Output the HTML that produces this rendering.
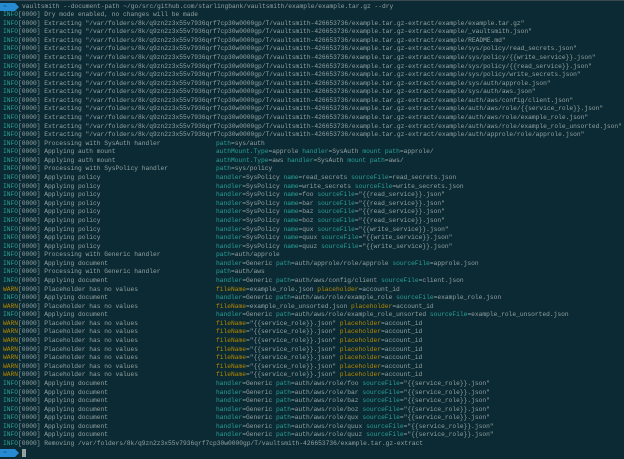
<!DOCTYPE html>
<html><head><meta charset="utf-8"><style>
html,body{margin:0;padding:0;background:#0b2a34;width:624px;height:459px;overflow:hidden}
body{font-family:"Liberation Mono",monospace;font-size:6.25px;color:#93a1a1;position:relative;border-top:1px solid #3a4a50;box-sizing:border-box}
#t{position:absolute;left:3px;top:1.5px}
.l{height:8.58px;line-height:8.58px;white-space:pre}
.i{color:#2aa198}.w{color:#b58900}.k{color:#2aa198}.o{color:#b58900}
.c{display:inline-block;width:213px}
.p{display:inline-block;position:relative;background:#268bd2;color:#0b2a34;width:12px;height:8px;line-height:8px;margin-left:-3px;padding-left:3px;margin-right:7px;vertical-align:top;margin-top:0.3px}
.p:after{content:"";position:absolute;right:-4px;top:0;border-left:4px solid #268bd2;border-top:4px solid transparent;border-bottom:4px solid transparent}
.cur{display:inline-block;width:4px;height:8px;background:#93a1a1;vertical-align:top;margin-top:0.3px}
</style></head><body><div id="t">
<div class="l"><span class="p">~</span>vaultsmith --document-path ~/go/src/github.com/starlingbank/vaultsmith/example/example.tar.gz --dry</div>
<div class="l"><span class="i">INFO</span>[0000] Dry mode enabled, no changes will be made</div>
<div class="l"><span class="i">INFO</span>[0000] Extracting "/var/folders/8k/q9zn2z3x55v7936qrf7cp30w0000gp/T/vaultsmith-426653736/example.tar.gz-extract/example/example.tar.gz"</div>
<div class="l"><span class="i">INFO</span>[0000] Extracting "/var/folders/8k/q9zn2z3x55v7936qrf7cp30w0000gp/T/vaultsmith-426653736/example.tar.gz-extract/example/_vaultsmith.json"</div>
<div class="l"><span class="i">INFO</span>[0000] Extracting "/var/folders/8k/q9zn2z3x55v7936qrf7cp30w0000gp/T/vaultsmith-426653736/example.tar.gz-extract/example/README.md"</div>
<div class="l"><span class="i">INFO</span>[0000] Extracting "/var/folders/8k/q9zn2z3x55v7936qrf7cp30w0000gp/T/vaultsmith-426653736/example.tar.gz-extract/example/sys/policy/read_secrets.json"</div>
<div class="l"><span class="i">INFO</span>[0000] Extracting "/var/folders/8k/q9zn2z3x55v7936qrf7cp30w0000gp/T/vaultsmith-426653736/example.tar.gz-extract/example/sys/policy/{{write_service}}.json"</div>
<div class="l"><span class="i">INFO</span>[0000] Extracting "/var/folders/8k/q9zn2z3x55v7936qrf7cp30w0000gp/T/vaultsmith-426653736/example.tar.gz-extract/example/sys/policy/{{read_service}}.json"</div>
<div class="l"><span class="i">INFO</span>[0000] Extracting "/var/folders/8k/q9zn2z3x55v7936qrf7cp30w0000gp/T/vaultsmith-426653736/example.tar.gz-extract/example/sys/policy/write_secrets.json"</div>
<div class="l"><span class="i">INFO</span>[0000] Extracting "/var/folders/8k/q9zn2z3x55v7936qrf7cp30w0000gp/T/vaultsmith-426653736/example.tar.gz-extract/example/sys/auth/approle.json"</div>
<div class="l"><span class="i">INFO</span>[0000] Extracting "/var/folders/8k/q9zn2z3x55v7936qrf7cp30w0000gp/T/vaultsmith-426653736/example.tar.gz-extract/example/sys/auth/aws.json"</div>
<div class="l"><span class="i">INFO</span>[0000] Extracting "/var/folders/8k/q9zn2z3x55v7936qrf7cp30w0000gp/T/vaultsmith-426653736/example.tar.gz-extract/example/auth/aws/config/client.json"</div>
<div class="l"><span class="i">INFO</span>[0000] Extracting "/var/folders/8k/q9zn2z3x55v7936qrf7cp30w0000gp/T/vaultsmith-426653736/example.tar.gz-extract/example/auth/aws/role/{{service_role}}.json"</div>
<div class="l"><span class="i">INFO</span>[0000] Extracting "/var/folders/8k/q9zn2z3x55v7936qrf7cp30w0000gp/T/vaultsmith-426653736/example.tar.gz-extract/example/auth/aws/role/example_role.json"</div>
<div class="l"><span class="i">INFO</span>[0000] Extracting "/var/folders/8k/q9zn2z3x55v7936qrf7cp30w0000gp/T/vaultsmith-426653736/example.tar.gz-extract/example/auth/aws/role/example_role_unsorted.json"</div>
<div class="l"><span class="i">INFO</span>[0000] Extracting "/var/folders/8k/q9zn2z3x55v7936qrf7cp30w0000gp/T/vaultsmith-426653736/example.tar.gz-extract/example/auth/approle/role/approle.json"</div>
<div class="l"><span class="c"><span class="i">INFO</span>[0000] Processing with SysAuth handler</span><span class="k">path</span>=sys/auth</div>
<div class="l"><span class="c"><span class="i">INFO</span>[0000] Applying auth mount</span><span class="k">authMount.Type</span>=approle <span class="k">handler</span>=SysAuth <span class="k">mount path</span>=approle/</div>
<div class="l"><span class="c"><span class="i">INFO</span>[0000] Applying auth mount</span><span class="k">authMount.Type</span>=aws <span class="k">handler</span>=SysAuth <span class="k">mount path</span>=aws/</div>
<div class="l"><span class="c"><span class="i">INFO</span>[0000] Processing with SysPolicy handler</span><span class="k">path</span>=sys/policy</div>
<div class="l"><span class="c"><span class="i">INFO</span>[0000] Applying policy</span><span class="k">handler</span>=SysPolicy <span class="k">name</span>=read_secrets <span class="k">sourceFile</span>=read_secrets.json</div>
<div class="l"><span class="c"><span class="i">INFO</span>[0000] Applying policy</span><span class="k">handler</span>=SysPolicy <span class="k">name</span>=write_secrets <span class="k">sourceFile</span>=write_secrets.json</div>
<div class="l"><span class="c"><span class="i">INFO</span>[0000] Applying policy</span><span class="k">handler</span>=SysPolicy <span class="k">name</span>=foo <span class="k">sourceFile</span>="{{read_service}}.json"</div>
<div class="l"><span class="c"><span class="i">INFO</span>[0000] Applying policy</span><span class="k">handler</span>=SysPolicy <span class="k">name</span>=bar <span class="k">sourceFile</span>="{{read_service}}.json"</div>
<div class="l"><span class="c"><span class="i">INFO</span>[0000] Applying policy</span><span class="k">handler</span>=SysPolicy <span class="k">name</span>=baz <span class="k">sourceFile</span>="{{read_service}}.json"</div>
<div class="l"><span class="c"><span class="i">INFO</span>[0000] Applying policy</span><span class="k">handler</span>=SysPolicy <span class="k">name</span>=boz <span class="k">sourceFile</span>="{{read_service}}.json"</div>
<div class="l"><span class="c"><span class="i">INFO</span>[0000] Applying policy</span><span class="k">handler</span>=SysPolicy <span class="k">name</span>=qux <span class="k">sourceFile</span>="{{write_service}}.json"</div>
<div class="l"><span class="c"><span class="i">INFO</span>[0000] Applying policy</span><span class="k">handler</span>=SysPolicy <span class="k">name</span>=quux <span class="k">sourceFile</span>="{{write_service}}.json"</div>
<div class="l"><span class="c"><span class="i">INFO</span>[0000] Applying policy</span><span class="k">handler</span>=SysPolicy <span class="k">name</span>=quuz <span class="k">sourceFile</span>="{{write_service}}.json"</div>
<div class="l"><span class="c"><span class="i">INFO</span>[0000] Processing with Generic handler</span><span class="k">path</span>=auth/approle</div>
<div class="l"><span class="c"><span class="i">INFO</span>[0000] Applying document</span><span class="k">handler</span>=Generic <span class="k">path</span>=auth/approle/role/approle <span class="k">sourceFile</span>=approle.json</div>
<div class="l"><span class="c"><span class="i">INFO</span>[0000] Processing with Generic handler</span><span class="k">path</span>=auth/aws</div>
<div class="l"><span class="c"><span class="i">INFO</span>[0000] Applying document</span><span class="k">handler</span>=Generic <span class="k">path</span>=auth/aws/config/client <span class="k">sourceFile</span>=client.json</div>
<div class="l"><span class="c"><span class="w">WARN</span>[0000] Placeholder has no values</span><span class="o">fileName</span>=example_role.json <span class="o">placeholder</span>=account_id</div>
<div class="l"><span class="c"><span class="i">INFO</span>[0000] Applying document</span><span class="k">handler</span>=Generic <span class="k">path</span>=auth/aws/role/example_role <span class="k">sourceFile</span>=example_role.json</div>
<div class="l"><span class="c"><span class="w">WARN</span>[0000] Placeholder has no values</span><span class="o">fileName</span>=example_role_unsorted.json <span class="o">placeholder</span>=account_id</div>
<div class="l"><span class="c"><span class="i">INFO</span>[0000] Applying document</span><span class="k">handler</span>=Generic <span class="k">path</span>=auth/aws/role/example_role_unsorted <span class="k">sourceFile</span>=example_role_unsorted.json</div>
<div class="l"><span class="c"><span class="w">WARN</span>[0000] Placeholder has no values</span><span class="o">fileName</span>="{{service_role}}.json" <span class="o">placeholder</span>=account_id</div>
<div class="l"><span class="c"><span class="w">WARN</span>[0000] Placeholder has no values</span><span class="o">fileName</span>="{{service_role}}.json" <span class="o">placeholder</span>=account_id</div>
<div class="l"><span class="c"><span class="w">WARN</span>[0000] Placeholder has no values</span><span class="o">fileName</span>="{{service_role}}.json" <span class="o">placeholder</span>=account_id</div>
<div class="l"><span class="c"><span class="w">WARN</span>[0000] Placeholder has no values</span><span class="o">fileName</span>="{{service_role}}.json" <span class="o">placeholder</span>=account_id</div>
<div class="l"><span class="c"><span class="w">WARN</span>[0000] Placeholder has no values</span><span class="o">fileName</span>="{{service_role}}.json" <span class="o">placeholder</span>=account_id</div>
<div class="l"><span class="c"><span class="w">WARN</span>[0000] Placeholder has no values</span><span class="o">fileName</span>="{{service_role}}.json" <span class="o">placeholder</span>=account_id</div>
<div class="l"><span class="c"><span class="w">WARN</span>[0000] Placeholder has no values</span><span class="o">fileName</span>="{{service_role}}.json" <span class="o">placeholder</span>=account_id</div>
<div class="l"><span class="c"><span class="i">INFO</span>[0000] Applying document</span><span class="k">handler</span>=Generic <span class="k">path</span>=auth/aws/role/foo <span class="k">sourceFile</span>="{{service_role}}.json"</div>
<div class="l"><span class="c"><span class="i">INFO</span>[0000] Applying document</span><span class="k">handler</span>=Generic <span class="k">path</span>=auth/aws/role/bar <span class="k">sourceFile</span>="{{service_role}}.json"</div>
<div class="l"><span class="c"><span class="i">INFO</span>[0000] Applying document</span><span class="k">handler</span>=Generic <span class="k">path</span>=auth/aws/role/baz <span class="k">sourceFile</span>="{{service_role}}.json"</div>
<div class="l"><span class="c"><span class="i">INFO</span>[0000] Applying document</span><span class="k">handler</span>=Generic <span class="k">path</span>=auth/aws/role/boz <span class="k">sourceFile</span>="{{service_role}}.json"</div>
<div class="l"><span class="c"><span class="i">INFO</span>[0000] Applying document</span><span class="k">handler</span>=Generic <span class="k">path</span>=auth/aws/role/qux <span class="k">sourceFile</span>="{{service_role}}.json"</div>
<div class="l"><span class="c"><span class="i">INFO</span>[0000] Applying document</span><span class="k">handler</span>=Generic <span class="k">path</span>=auth/aws/role/quux <span class="k">sourceFile</span>="{{service_role}}.json"</div>
<div class="l"><span class="c"><span class="i">INFO</span>[0000] Applying document</span><span class="k">handler</span>=Generic <span class="k">path</span>=auth/aws/role/quuz <span class="k">sourceFile</span>="{{service_role}}.json"</div>
<div class="l"><span class="i">INFO</span>[0000] Removing /var/folders/8k/q9zn2z3x55v7936qrf7cp30w0000gp/T/vaultsmith-426653736/example.tar.gz-extract</div>
<div class="l"><span class="p">~</span><span class="cur"></span></div>
</div></body></html>
